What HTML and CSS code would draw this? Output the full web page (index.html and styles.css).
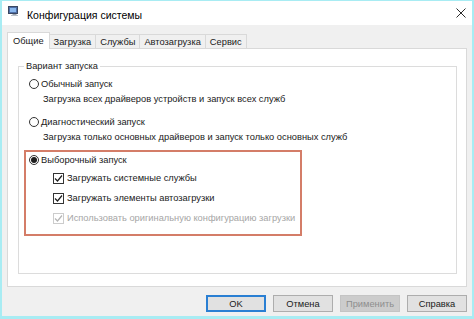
FILE: index.html
```html
<!DOCTYPE html>
<html lang="ru">
<head>
<meta charset="utf-8">
<title>Конфигурация системы</title>
<link rel="stylesheet" href="styles.css">
</head>
<body>
<div class="window">
  <div class="titlebar">
    <svg class="title-icon" width="11" height="10" viewBox="0 0 11 10">
      <rect x="0.5" y="0.5" width="9" height="7" fill="#4f6fa8" stroke="#3b4862"/>
      <rect x="2" y="2" width="6" height="4" fill="#8ab8ee"/>
      <rect x="4.5" y="8" width="4" height="1" fill="#9aa3b0"/>
      <rect x="3" y="9" width="7" height="1" fill="#b8bfc8"/>
    </svg>
    <span class="title">Конфигурация системы</span>
    <svg class="close" width="10" height="10" viewBox="0 0 10 10">
      <path d="M0.5 0.5 L9.5 9.5 M9.5 0.5 L0.5 9.5" stroke="#2b2b2b" stroke-width="1" fill="none"/>
    </svg>
  </div>
  <div class="client">
    <div class="tabs">
      <div class="tab active">Общие</div>
      <div class="tab">Загрузка</div>
      <div class="tab">Службы</div>
      <div class="tab">Автозагрузка</div>
      <div class="tab">Сервис</div>
    </div>
    <div class="panel">
      <fieldset class="group">
        <legend class="group-title">Вариант запуска</legend>
        <div class="opt"><span class="radio"></span><span>Обычный запуск</span></div>
        <div class="desc">Загрузка всех драйверов устройств и запуск всех служб</div>
        <div class="opt opt-gap"><span class="radio"></span><span>Диагностический запуск</span></div>
        <div class="desc">Загрузка только основных драйверов и запуск только основных служб</div>
        <div class="highlight">
          <div class="opt"><span class="radio on"></span><span>Выборочный запуск</span></div>
          <div class="opt check-row first-check">
            <span class="cb"><svg width="9" height="9" viewBox="0 0 9 9"><path d="M1 4.5 L3.5 7 L8 1.5" stroke="#1e1e1e" stroke-width="1.2" fill="none"/></svg></span>
            <span>Загружать системные службы</span>
          </div>
          <div class="opt check-row">
            <span class="cb"><svg width="9" height="9" viewBox="0 0 9 9"><path d="M1 4.5 L3.5 7 L8 1.5" stroke="#1e1e1e" stroke-width="1.2" fill="none"/></svg></span>
            <span>Загружать элементы автозагрузки</span>
          </div>
          <div class="opt check-row disabled">
            <span class="cb"><svg width="9" height="9" viewBox="0 0 9 9"><path d="M1 4.5 L3.5 7 L8 1.5" stroke="#b5b5b5" stroke-width="1.2" fill="none"/></svg></span>
            <span>Использовать оригинальную конфигурацию загрузки</span>
          </div>
        </div>
      </fieldset>
    </div>
    <div class="footer">
      <button class="btn default">OK</button>
      <button class="btn">Отмена</button>
      <button class="btn" disabled>Применить</button>
      <button class="btn">Справка</button>
    </div>
  </div>
</div>
</body>
</html>
```
FILE: styles.css
```css
html, body {
  margin: 0;
  padding: 0;
}
body {
  width: 474px;
  height: 319px;
  overflow: hidden;
  background: #a8ecf3;
  font-family: "Liberation Sans", Arial, sans-serif;
  font-size: 9.3px;
  color: #1a1a1a;
}
.window {
  margin: 1px 2px 0 2px;
  height: 315px;
  display: flex;
  flex-direction: column;
  background: #f0f0f0;
}
.titlebar {
  height: 24px;
  flex: none;
  background: #ffffff;
  display: flex;
  align-items: center;
  padding: 0 6px 0 6px;
}
.title-icon {
  flex: none;
  margin-right: 8px;
  margin-top: -4px;
}
.title {
  flex: 1;
  font-size: 10.5px;
  color: #000;
  padding-top: 4px;
}
.close {
  flex: none;
  margin-top: -1px;
}
.client {
  flex: 1;
  display: flex;
  flex-direction: column;
  padding: 7px 5px 0 5px;
}
.tabs {
  display: flex;
  align-items: flex-end;
  height: 17px;
  margin-bottom: -1px;
}
.tab {
  height: 15px;
  box-sizing: border-box;
  line-height: 14px;
  padding: 0 4px;
  border: 1px solid #d9d9d9;
  border-left: none;
  border-bottom: none;
  background: #f0f0f0;
  white-space: nowrap;
}
.tab.active {
  height: 17px;
  line-height: 16px;
  padding: 0 5px;
  background: #ffffff;
  border-left: 1px solid #d9d9d9;
  z-index: 1;
}
.panel {
  height: 239px;
  box-sizing: border-box;
  background: #ffffff;
  border: 1px solid #d9d9d9;
  padding: 10px 9px 12px 10px;
  display: flex;
  flex-direction: column;
}
.group {
  flex: 1;
  margin: 0;
  min-width: 0;
  border: 1px solid #dcdcdc;
  padding: 4px 0 0 10px;
}
.group-title {
  margin-left: -5px;
  padding: 0 2px;
  line-height: 14px;
}
.opt {
  display: flex;
  align-items: center;
  height: 14px;
  white-space: nowrap;
}
.opt-gap {
  margin-top: 9px;
}
.radio {
  flex: none;
  width: 10px;
  height: 10px;
  box-sizing: border-box;
  border: 1px solid #333;
  border-radius: 50%;
  background: #fff;
  margin-right: 2px;
  display: flex;
  align-items: center;
  justify-content: center;
}
.radio.on::after {
  content: "";
  width: 6px;
  height: 6px;
  border-radius: 50%;
  background: #1e1e1e;
}
.desc {
  height: 14px;
  line-height: 14px;
  padding-left: 14px;
  margin-top: 1px;
  white-space: nowrap;
}
.highlight {
  width: 278px;
  box-sizing: border-box;
  margin: 6px 0 0 -5px;
  border: 2px solid #d47d68;
  padding: 1px 0 9px 3px;
}
.check-row {
  margin-top: 6px;
}
.first-check {
  margin-top: 4px;
}
.cb {
  flex: none;
  width: 11px;
  height: 11px;
  box-sizing: border-box;
  border: 1px solid #333;
  background: #fff;
  margin-left: 24px;
  margin-right: 3px;
  display: flex;
  align-items: center;
  justify-content: center;
}
.disabled {
  color: #a6a6a6;
}
.disabled .cb {
  border-color: #cccccc;
}
.footer {
  display: flex;
  justify-content: flex-end;
  gap: 7px;
  padding-top: 8px;
}
.btn {
  width: 60px;
  height: 17px;
  box-sizing: border-box;
  padding: 0;
  margin: 0;
  font-family: inherit;
  font-size: 9.3px;
  color: #1a1a1a;
  background: #e1e1e1;
  border: 1px solid #adadad;
  border-radius: 0;
}
.btn.default {
  border: 2px solid #2a7fd3;
}
.btn:disabled {
  background: #cccccc;
  border-color: #c4c4c4;
  color: #8e8e8e;
}
```
